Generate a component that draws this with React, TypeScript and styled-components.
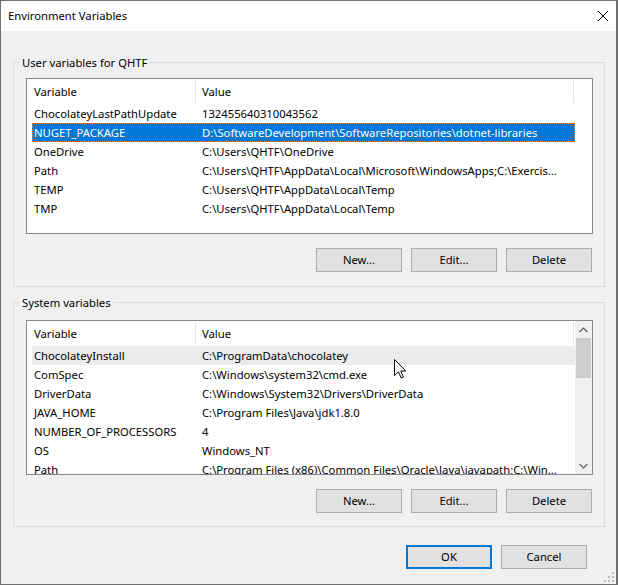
import React from 'react';
import styled, { createGlobalStyle, css } from 'styled-components';

const GlobalStyle = createGlobalStyle`
  html, body {
    margin: 0;
    padding: 0;
    background: #6f6f6f;
  }
  body {
    font-family: 'Noto Sans', 'Liberation Sans', sans-serif;
    font-size: 11.25px;
    color: #000;
  }
`;

// Dialog frame
const Window = styled.div`
  position: relative;
  width: 618px;
  height: 585px;
  box-sizing: border-box;
  border: 1px solid #6f6f6f;
  border-right-width: 2px;
  background: #f0f0f0;
  display: flex;
  flex-direction: column;
  overflow: hidden;
`;

const TitleBar = styled.div`
  height: 30px;
  flex: none;
  background: #fff;
  display: flex;
  align-items: center;
  justify-content: space-between;
  padding: 0 8px 0 7px;
`;

const Title = styled.span`
  line-height: 16px;
`;

const CloseButton = styled.svg`
  width: 10px;
  height: 10px;
  display: block;
`;

const Body = styled.div`
  flex: 1;
  display: flex;
  flex-direction: column;
  padding: 0 11px 0 12px;
`;

// Group box with caption on its top border
const Group = styled.fieldset<{ $gapTop: number; $padTop: number; $padBottom: number }>`
  margin: ${p => p.$gapTop}px 0 0 0;
  min-width: 0;
  border: 1px solid #dcdcdc;
  padding: ${p => p.$padTop}px 11px ${p => p.$padBottom}px 12px;
  display: flex;
  flex-direction: column;
`;

const GroupLabel = styled.legend`
  margin-left: -6px;
  padding: 0 2px;
  line-height: 15px;
`;

const ListView = styled.div<{ $height: number }>`
  height: ${p => p.$height}px;
  box-sizing: border-box;
  border: 1px solid #828790;
  background: #fff;
  display: flex;
  overflow: hidden;
`;

const ListContent = styled.div`
  flex: 1;
  min-width: 0;
  padding-left: 5px;
  overflow: hidden;
`;

const HeaderRow = styled.div`
  display: grid;
  grid-template-columns: 164px 378px;
  height: 25px;
`;

const HeaderCell = styled.div<{ $pad: number }>`
  box-sizing: border-box;
  border-right: 1px solid #e5e5e5;
  margin: 1px 0 1px 0;
  padding-left: ${p => p.$pad}px;
  line-height: 23px;
  white-space: nowrap;
`;

const Row = styled.div<{ $state?: 'selected' | 'hot' }>`
  display: grid;
  grid-template-columns: 164px 379px;
  width: 543px;
  height: 19px;
  line-height: 19px;
  white-space: nowrap;
  ${p =>
    p.$state === 'selected' &&
    css`
      background: #0078d7;
      color: #fff;
      outline: 1px dotted #ff8728;
      outline-offset: -1px;
    `}
  ${p =>
    p.$state === 'hot' &&
    css`
      background: #ececec;
    `}
`;

const Cell = styled.div<{ $pad: number }>`
  padding-left: ${p => p.$pad}px;
  overflow: hidden;
`;

const ScrollBar = styled.div`
  width: 17px;
  flex: none;
  background: #f0f0f0;
  display: flex;
  flex-direction: column;
`;

const ScrollArrow = styled.div`
  height: 17px;
  flex: none;
  display: flex;
  align-items: center;
  justify-content: center;
`;

const ScrollTrack = styled.div`
  flex: 1;
  padding: 0 1px;
`;

const ScrollThumb = styled.div`
  height: 40px;
  background: #cdcdcd;
`;

const ButtonRow = styled.div<{ $gapTop: number; $right: number }>`
  display: flex;
  justify-content: flex-end;
  gap: 9px;
  margin-top: ${p => p.$gapTop}px;
  margin-right: ${p => p.$right}px;
`;

const Button = styled.button<{ $default?: boolean }>`
  width: 86px;
  height: 24px;
  box-sizing: border-box;
  margin: 0;
  padding: 0 0 2px 0;
  background: #e1e1e1;
  border: 1px solid #adadad;
  font: inherit;
  color: #000;
  ${p =>
    p.$default &&
    css`
      border: 2px solid #0078d7;
    `}
`;

const Pointer = styled.svg`
  position: absolute;
  left: 393px;
  top: 358px;
  width: 13px;
  height: 20px;
`;

const SizeGrip = styled.svg`
  position: absolute;
  right: 2px;
  bottom: 2px;
  width: 10px;
  height: 10px;
`;

type Variable = { name: string; value: string; state?: 'selected' | 'hot' };

const userVariables: Variable[] = [
  { name: 'ChocolateyLastPathUpdate', value: '132455640310043562' },
  {
    name: 'NUGET_PACKAGE',
    value: 'D:\\SoftwareDevelopment\\SoftwareRepositories\\dotnet-libraries',
    state: 'selected',
  },
  { name: 'OneDrive', value: 'C:\\Users\\QHTF\\OneDrive' },
  { name: 'Path', value: 'C:\\Users\\QHTF\\AppData\\Local\\Microsoft\\WindowsApps;C:\\Exercis...' },
  { name: 'TEMP', value: 'C:\\Users\\QHTF\\AppData\\Local\\Temp' },
  { name: 'TMP', value: 'C:\\Users\\QHTF\\AppData\\Local\\Temp' },
];

const systemVariables: Variable[] = [
  { name: 'ChocolateyInstall', value: 'C:\\ProgramData\\chocolatey', state: 'hot' },
  { name: 'ComSpec', value: 'C:\\Windows\\system32\\cmd.exe' },
  { name: 'DriverData', value: 'C:\\Windows\\System32\\Drivers\\DriverData' },
  { name: 'JAVA_HOME', value: 'C:\\Program Files\\Java\\jdk1.8.0' },
  { name: 'NUMBER_OF_PROCESSORS', value: '4' },
  { name: 'OS', value: 'Windows_NT' },
  { name: 'Path', value: 'C:\\Program Files (x86)\\Common Files\\Oracle\\Java\\javapath;C:\\Win...' },
];

const Chevron: React.FC<{ up?: boolean }> = ({ up }) => (
  <svg width="9" height="6" viewBox="0 0 9 6">
    <path
      d={up ? 'M0.5 5 L4.5 1 L8.5 5' : 'M0.5 1 L4.5 5 L8.5 1'}
      fill="none"
      stroke="#606060"
      strokeWidth="1.2"
    />
  </svg>
);

const VariableList: React.FC<{ items: Variable[]; height: number; scroll?: boolean }> = ({
  items,
  height,
  scroll,
}) => (
  <ListView $height={height}>
    <ListContent>
      <HeaderRow>
        <HeaderCell $pad={2}>Variable</HeaderCell>
        <HeaderCell $pad={6}>Value</HeaderCell>
      </HeaderRow>
      {items.map(item => (
        <Row key={item.name} $state={item.state}>
          <Cell $pad={2}>{item.name}</Cell>
          <Cell $pad={6}>{item.value}</Cell>
        </Row>
      ))}
    </ListContent>
    {scroll && (
      <ScrollBar>
        <ScrollArrow>
          <Chevron up />
        </ScrollArrow>
        <ScrollTrack>
          <ScrollThumb />
        </ScrollTrack>
        <ScrollArrow>
          <Chevron />
        </ScrollArrow>
      </ScrollBar>
    )}
  </ListView>
);

const ActionButtons: React.FC<{ gapTop: number }> = ({ gapTop }) => (
  <ButtonRow $gapTop={gapTop} $right={1}>
    <Button>New...</Button>
    <Button>Edit...</Button>
    <Button>Delete</Button>
  </ButtonRow>
);

const App: React.FC = () => (
  <>
    <GlobalStyle />
    <Window>
      <TitleBar>
        <Title>Environment Variables</Title>
        <CloseButton viewBox="0 0 10 10">
          <path d="M0 0 L10 10 M10 0 L0 10" stroke="#000" strokeWidth="1" />
        </CloseButton>
      </TitleBar>
      <Body>
        <Group $gapTop={24} $padTop={8} $padBottom={14}>
          <GroupLabel>User variables for QHTF</GroupLabel>
          <VariableList items={userVariables} height={156} />
          <ActionButtons gapTop={14} />
        </Group>
        <Group $gapTop={8} $padTop={10} $padBottom={13}>
          <GroupLabel>System variables</GroupLabel>
          <VariableList items={systemVariables} height={155} scroll />
          <ActionButtons gapTop={14} />
        </Group>
        <ButtonRow $gapTop={18} $right={18}>
          <Button $default>OK</Button>
          <Button>Cancel</Button>
        </ButtonRow>
      </Body>
      <Pointer viewBox="0 0 13 20">
        <path
          d="M0.5 0.5 L0.5 16.5 L4.5 12.8 L7.2 19 L9.4 18 L6.8 12 L11.8 12 Z"
          fill="#fff"
          stroke="#000"
          strokeWidth="1"
          strokeLinejoin="miter"
        />
      </Pointer>
      <SizeGrip viewBox="0 0 10 10">
        <g fill="#bcbcbc">
          <rect x="8" y="0" width="2" height="2" />
          <rect x="4" y="4" width="2" height="2" />
          <rect x="8" y="4" width="2" height="2" />
          <rect x="0" y="8" width="2" height="2" />
          <rect x="4" y="8" width="2" height="2" />
          <rect x="8" y="8" width="2" height="2" />
        </g>
      </SizeGrip>
    </Window>
  </>
);

export default App;
